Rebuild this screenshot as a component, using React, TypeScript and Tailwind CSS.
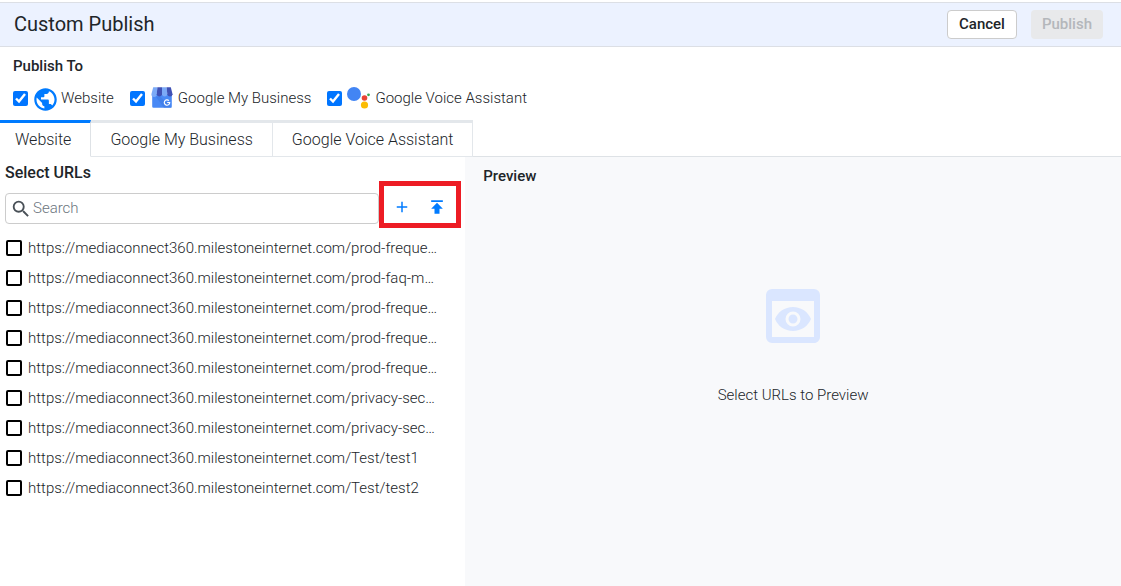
import React, { useState } from 'react';
import { MdAdd, MdPreview, MdPublic, MdPublish, MdSearch } from 'react-icons/md';

const URLS = [
    'https://mediaconnect360.milestoneinternet.com/prod-freque…',
    'https://mediaconnect360.milestoneinternet.com/prod-faq-m…',
    'https://mediaconnect360.milestoneinternet.com/prod-freque…',
    'https://mediaconnect360.milestoneinternet.com/prod-freque…',
    'https://mediaconnect360.milestoneinternet.com/prod-freque…',
    'https://mediaconnect360.milestoneinternet.com/privacy-sec…',
    'https://mediaconnect360.milestoneinternet.com/privacy-sec…',
    'https://mediaconnect360.milestoneinternet.com/Test/test1',
    'https://mediaconnect360.milestoneinternet.com/Test/test2',
];

const TABS = ['Website', 'Google My Business', 'Google Voice Assistant'];

const BusinessIcon = () => (
    <svg width="22" height="21" viewBox="0 0 22 21" aria-hidden="true">
        <path d="M1.2 7h19.6v12.4a1.3 1.3 0 0 1-1.3 1.3h-17a1.3 1.3 0 0 1-1.3-1.3z" fill="#4989f5" />
        <path d="M9 9.5 20.8 20.7H13L5 10z" fill="#3c78e0" opacity=".5" />
        <path d="M2.2.3H6.4L5.8 7.2a2.7 2.7 0 0 1-5.4 0z" fill="#7baaf7" />
        <path d="M6.4.3H11v6.9a2.7 2.7 0 0 1-5.3 0z" fill="#3f51b5" />
        <path d="M11 .3h4.6l.7 6.9a2.7 2.7 0 0 1-5.3 0z" fill="#7baaf7" />
        <path d="M15.6.3h4.2l1.8 6.9a2.7 2.7 0 0 1-5.3 0z" fill="#3f51b5" />
        <path d="M17.9 13.6a2.7 2.7 0 1 0 .8 1.9H16.2" fill="none" stroke="#fff" strokeWidth="1.2" />
    </svg>
);

const AssistantIcon = () => (
    <svg width="24" height="22" viewBox="0 0 24 22" aria-hidden="true">
        <circle cx="7" cy="7" r="7" fill="#4285f4" />
        <circle cx="17.5" cy="11" r="2.8" fill="#ea4335" />
        <circle cx="17.5" cy="18" r="3.6" fill="#fbbc04" />
        <circle cx="21.5" cy="7.8" r="1.4" fill="#34a853" />
    </svg>
);

const CHANNELS = [
    { name: 'Website', icon: <MdPublic size={27} className="mt-0.5 text-[#007bff]" /> },
    { name: 'Google My Business', icon: <span className="pb-0.5"><BusinessIcon /></span> },
    { name: 'Google Voice Assistant', icon: <AssistantIcon /> },
];

export default function App() {
    const [tab, setTab] = useState('Website');
    const [search, setSearch] = useState('');
    const [selected, setSelected] = useState<number[]>([]);

    const toggle = (i: number) => setSelected(s => (s.includes(i) ? s.filter(n => n !== i) : [...s, i]));

    return (
        <div className="flex min-h-screen flex-col bg-white pt-0.5 font-[Roboto,sans-serif] font-light text-[#212529]">
            <header className="flex h-[45px] items-center justify-between border-y border-[#dcdfe5] bg-[#ecf2ff] pr-[18px] pb-px pl-3.5">
                <h1 className="text-xl leading-7 font-normal">Custom Publish</h1>
                <div className="flex gap-3.5 text-[15px] leading-5 font-medium">
                    <button className="h-[29px] rounded border border-[#cccccc] bg-white px-[11px]">Cancel</button>
                    <button disabled className="h-[29px] rounded bg-[#e8e9eb] px-[11px] text-[#b4b7bb]">Publish</button>
                </div>
            </header>

            <section className="px-[13px] pt-[7px] pb-[6px]">
                <h2 className="text-[15px] leading-6 font-medium">Publish To</h2>
                <div className="mt-1 flex h-8 items-center gap-4">
                    {CHANNELS.map(c => (
                        <label key={c.name} className="flex items-center text-[15px]">
                            <input type="checkbox" defaultChecked className="size-[15px] accent-[#0075ff]" />
                            <span className="flex w-[33px] items-center justify-center pl-px">{c.icon}</span>
                            <span>{c.name}</span>
                        </label>
                    ))}
                </div>
            </section>

            <nav className="flex border-b border-[#dee2e6]">
                {TABS.map(t => (
                    <button
                        key={t}
                        onClick={() => setTab(t)}
                        className={`-mb-px h-[37px] border-t-3 border-r text-base ${tab === t ? 'border-t-[#007bff] border-r-[#dee2e6] border-b border-b-white bg-white pr-[19px] pl-[15px]' : 'border-b border-[#e3e7eb] px-[19px]'}`}
                    >
                        {t}
                    </button>
                ))}
            </nav>

            <main className="flex grow">
                <section className="w-[41.5%] shrink-0 pl-[5px]">
                    <h2 className="pt-1 text-base leading-6 font-medium">Select URLs</h2>
                    <div className="mt-2 flex items-center pr-1">
                        <label className="flex h-[31px] grow items-center gap-px rounded border border-[#cccccc] pl-1 text-[#495057]">
                            <MdSearch size={22} />
                            <input
                                type="text"
                                aria-label="Search"
                                placeholder="Search"
                                value={search}
                                onChange={e => setSearch(e.target.value)}
                                className="min-w-0 grow text-[15px] outline-none placeholder:text-[#6c757d]"
                            />
                        </label>
                        <div className="relative flex h-[31px] w-[82px] items-center justify-center gap-4 pb-1 text-[#007bff]">
                            <button aria-label="Add URL"><MdAdd size={18} /></button>
                            <button aria-label="Upload URLs"><MdPublish size={20} /></button>
                            <div className="pointer-events-none absolute inset-x-0 -top-3 -bottom-1 border-5 border-[#ed1c24]" />
                        </div>
                    </div>
                    <ul className="mt-[9px]">
                        {URLS.map((url, i) => (
                            <li key={i}>
                                <label className="flex h-[30px] items-center gap-1.5 text-[15px]">
                                    <input
                                        type="checkbox"
                                        checked={selected.includes(i)}
                                        onChange={() => toggle(i)}
                                        className="ml-px size-4 shrink-0 appearance-none rounded-xs border-2 border-black checked:bg-[#007bff]"
                                    />
                                    <span className="truncate">{url}</span>
                                </label>
                            </li>
                        ))}
                    </ul>
                </section>

                <section className="flex grow flex-col bg-[#f8f9fb]">
                    <h2 className="px-[18px] pt-[7px] text-[15px] leading-6 font-medium">Preview</h2>
                    <div className="flex flex-col items-center pt-[92px]">
                        <MdPreview size={72} className="text-[#dae6ff]" />
                        <p className="mt-[31px] text-[15px] leading-6">Select URLs to Preview</p>
                    </div>
                </section>
            </main>
        </div>
    );
}
